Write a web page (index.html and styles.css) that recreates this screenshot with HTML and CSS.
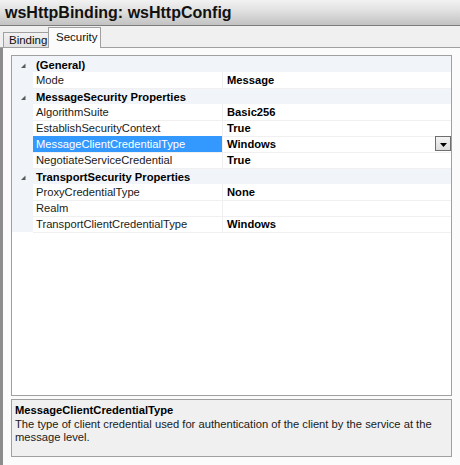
FILE: index.html
```html
<!DOCTYPE html>
<html>
<head>
<meta charset="utf-8">
<link rel="stylesheet" href="styles.css">
</head>
<body>
<div class="window">
  <div class="titlebar">wsHttpBinding: wsHttpConfig</div>
  <div class="tabs">
    <div class="tab">Binding</div>
    <div class="tab active">Security</div>
  </div>
  <div class="page">
    <div class="grid">
      <div class="row cat"><span class="gut"><svg width="21" height="16" viewBox="0 0 21 16"><polygon points="13.5,7.5 13.5,12 9,12" fill="#595959"/></svg></span><span class="cname">(General)</span></div>
      <div class="row prop"><span class="gut"></span><span class="name">Mode</span><span class="val">Message</span></div>
      <div class="row cat"><span class="gut"><svg width="21" height="16" viewBox="0 0 21 16"><polygon points="13.5,7.5 13.5,12 9,12" fill="#595959"/></svg></span><span class="cname">MessageSecurity Properties</span></div>
      <div class="row prop"><span class="gut"></span><span class="name">AlgorithmSuite</span><span class="val">Basic256</span></div>
      <div class="row prop"><span class="gut"></span><span class="name">EstablishSecurityContext</span><span class="val">True</span></div>
      <div class="row prop"><span class="gut"></span><span class="name sel">MessageClientCredentialType</span><span class="val">Windows<span class="drop"><svg width="7" height="4" viewBox="0 0 7 4"><polygon points="0,0 7,0 3.5,4" fill="#000"/></svg></span></span></div>
      <div class="row prop"><span class="gut"></span><span class="name">NegotiateServiceCredential</span><span class="val">True</span></div>
      <div class="row cat"><span class="gut"><svg width="21" height="16" viewBox="0 0 21 16"><polygon points="13.5,7.5 13.5,12 9,12" fill="#595959"/></svg></span><span class="cname">TransportSecurity Properties</span></div>
      <div class="row prop"><span class="gut"></span><span class="name">ProxyCredentialType</span><span class="val">None</span></div>
      <div class="row prop"><span class="gut"></span><span class="name">Realm</span><span class="val"></span></div>
      <div class="row prop"><span class="gut"></span><span class="name">TransportClientCredentialType</span><span class="val">Windows</span></div>
    </div>
    <div class="desc">
      <div class="dtitle">MessageClientCredentialType</div>
      <div class="dtext">The type of client credential used for authentication of the client by the service at the<br>message level.</div>
    </div>
  </div>
</div>
</body>
</html>
```
FILE: styles.css
```css
html, body {
  margin: 0;
  padding: 0;
  background: #f0f0f0;
}
body {
  font-family: "Liberation Sans", Arial, sans-serif;
  font-size: 11.2px;
  color: #000;
}
.window {
  width: 460px;
  height: 465px;
  overflow: hidden;
  display: flex;
  flex-direction: column;
}
.titlebar {
  height: 25px;
  border-bottom: 1px solid #7c7c7c;
  background: linear-gradient(#f2f2f2, #e2e2e2 40%, #c2c2c2);
  font-weight: bold;
  font-size: 16px;
  line-height: 25px;
  padding-left: 5px;
  color: #111;
  flex: none;
}
.tabs {
  height: 21px;
  flex: none;
  display: flex;
  align-items: flex-end;
  padding-left: 3px;
  border-bottom: 1px solid #a0a0a0;
  background: #f0f0f0;
}
.tab {
  box-sizing: border-box;
  width: 46px;
  height: 15px;
  border: 1px solid #a0a0a0;
  border-bottom: none;
  background: linear-gradient(#f2f2f2, #e2e2e2);
  line-height: 15px;
  padding-left: 5px;
  font-size: 11.5px;
  color: #111;
}
.tab.active {
  width: 53px;
  height: 21px;
  margin-left: -1px;
  margin-bottom: -1px;
  background: #fbfbfb;
  line-height: 18px;
  padding-left: 7px;
}
.page {
  flex: 1;
  background: #fbfbfb;
  border-left: 3px solid #8c8c8c;
  padding: 7px 0 0 8px;
  display: flex;
  flex-direction: column;
}
.grid {
  box-sizing: border-box;
  width: 441px;
  height: 341px;
  border: 1px solid #a0a0a0;
  background: #fff;
  flex: none;
}
.row {
  display: grid;
  grid-template-columns: 21px 189px 1fr;
  height: 16px;
  line-height: 15px;
}
.row.cat {
  background: #f1f4f9;
  font-weight: bold;
}
.row.cat .cname {
  grid-column: 2 / 4;
  padding-left: 3px;
  padding-top: 1px;
  line-height: 16px;
}
.gut {
  background: #f1f4f9;
  height: 16px;
}
.gut svg { display: block; }
.name {
  padding-left: 3px;
  padding-top: 1px;
  border-bottom: 1px solid #f0f0f0;
  color: #1a1a1a;
  white-space: nowrap;
}
.name.sel {
  background: #3399ff;
  color: #fff;
  border-bottom-color: #f0f0f0;
}
.val {
  border-left: 1px solid #f0f0f0;
  border-bottom: 1px solid #f0f0f0;
  padding-left: 4px;
  padding-top: 1px;
  font-weight: bold;
  display: flex;
  align-items: flex-start;
}
.drop {
  margin-left: auto;
  margin-top: -1px;
  box-sizing: border-box;
  width: 16px;
  height: 15px;
  border: 1px solid #6e6e6e;
  background: linear-gradient(#f4f4f4, #dcdcdc);
  display: flex;
  align-items: center;
  justify-content: center;
  padding-top: 2px;
}
.drop svg { display: block; }
.desc {
  box-sizing: border-box;
  width: 441px;
  height: 58px;
  margin-top: 3px;
  border: 1px solid #a0a0a0;
  background: #f0f0f0;
  padding: 4px 3px 0 3px;
  line-height: 13.5px;
  flex: none;
}
.dtitle {
  font-weight: bold;
}
.dtext {
  color: #1a1a1a;
}
```
